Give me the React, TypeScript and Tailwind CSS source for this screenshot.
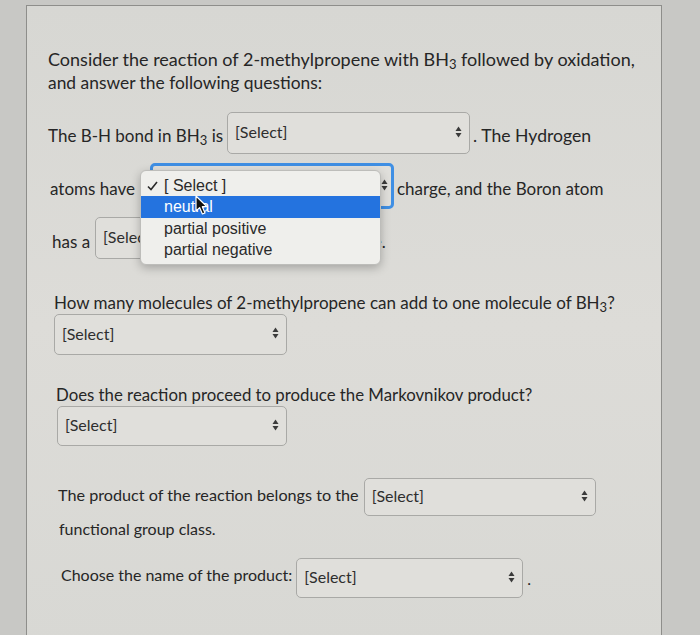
import React from 'react'

const Arrows = () => (
  <svg width="7" height="12" viewBox="0 0 7 12" className="shrink-0">
    <path d="M0.5 5 L3.5 0.5 L6.5 5 Z" fill="#3a3a3a" />
    <path d="M0.5 7 L6.5 7 L3.5 11.5 Z" fill="#3a3a3a" />
  </svg>
)

interface SelectProps {
  size: string
  focused?: boolean
}

const Select = ({ size, focused }: SelectProps) => (
  <div
    className={`${size} shrink-0 flex items-center justify-between pl-[7px] pb-[3px] rounded-[5px] bg-[#e0dfdb] ${
      focused ? 'pr-[3px] border-[3px] border-[#3f8fe4]' : 'pr-[7px] border border-[#a9a9a6]'
    }`}
  >
    <span className="text-[16px] text-[#2e2e2e]">[Select]</span>
    <Arrows />
  </div>
)

const Sub = () => <sub className="text-[13px]">3</sub>

export default function App() {
  return (
    <div className="relative w-[700px] h-[635px] overflow-hidden bg-[#c8c8c5] font-[Lato,sans-serif] leading-[23px] text-[#262626]">
      <div className="ml-[26px] mt-[5px] w-[636px] h-[640px] border-l border-t border-r border-[#8e8e8b] bg-gradient-to-b from-[#d7d7d3] via-[#dddcd8] to-[#d8d8d4] pt-[42px]">
        {/* intro */}
        <p className="ml-[21px]">
          <span className="text-[18px]">
            Consider the reaction of 2-methylpropene with BH<Sub /> followed by oxidation,
          </span>
          <br />
          <span className="text-[17.4px]">and answer the following questions:</span>
        </p>

        {/* inline selects */}
        <div className="ml-[21px] mt-[18px] flex items-center h-[42px] text-[17px]">
          <span className="pt-1">
            The B-H bond in BH<Sub /> is
          </span>
          <div className="ml-1">
            <Select size="w-[243px] h-[42px]" />
          </div>
          <span className="ml-[3px] pt-1 text-[17.6px]">. The Hydrogen</span>
        </div>

        <div className="ml-[23px] mt-[9px] flex items-center h-[46px] text-[17px]">
          <span className="pt-1">atoms have</span>
          <div className="ml-[15px]">
            <Select size="w-[244px] h-[46px]" focused />
          </div>
          <span className="ml-[3px] pt-1">charge, and the Boron atom</span>
        </div>

        <div className="ml-[25px] mt-[8px] flex items-center h-[42px] text-[17px]">
          <span className="pt-[7px]">has a</span>
          <div className="ml-[5px]">
            <Select size="w-[233px] h-[42px]" />
          </div>
          <span className="ml-[4px] pt-[7px]">charge.</span>
        </div>

        {/* question 2 */}
        <p className="ml-[27px] mt-[32px] text-[17px]">
          How many molecules of 2-methylpropene can add to one molecule of BH<Sub />?
        </p>
        <div className="ml-[27px]">
          <Select size="w-[233px] h-[41px]" />
        </div>

        {/* question 3 */}
        <p className="ml-[29px] mt-[28px] text-[16.8px]">
          Does the reaction proceed to produce the Markovnikov product?
        </p>
        <div className="ml-[30px]">
          <Select size="w-[230px] h-[40px]" />
        </div>

        {/* question 4 */}
        <div className="ml-[31px] mt-[32px] flex items-center h-[38px] text-[16.2px]">
          <span className="pb-[5px]">The product of the reaction belongs to the</span>
          <div className="ml-[5px]">
            <Select size="w-[232px] h-[38px]" />
          </div>
        </div>
        <p className="ml-[32px] mt-[1px] text-[16px]">functional group class.</p>

        {/* question 5 */}
        <div className="ml-[34px] mt-[18px] flex items-center h-[40px] text-[16px]">
          <span className="pb-[7px]">Choose the name of the product:</span>
          <div className="ml-[4px]">
            <Select size="w-[227px] h-[40px]" />
          </div>
          <span className="ml-[4px]">.</span>
        </div>
      </div>

      {/* open native dropdown */}
      <div className="absolute left-[140px] top-[170px] w-[241px] py-[4px] rounded-[6px] bg-[#efefec] border border-[#bdbdba] shadow-[0_3px_10px_rgba(0,0,0,0.25)] font-['Liberation_Sans',Arial,sans-serif] text-[16px] leading-[21px] text-[#2a2a2a]">
        <div className="relative pl-[23px] h-[21px]">
          <svg width="11" height="10" viewBox="0 0 11 10" className="absolute left-[6px] top-[6px]">
            <path d="M1 5.5 L4 8.5 L10 1" fill="none" stroke="#2a2a2a" strokeWidth="1.6" />
          </svg>
          [ Select ]
        </div>
        <div className="pl-[23px] h-[22px] bg-[#2473df] text-white">neutral</div>
        <div className="pl-[23px] h-[21px]">partial positive</div>
        <div className="pl-[23px] h-[21px]">partial negative</div>
      </div>

      {/* mouse pointer */}
      <svg width="14" height="21" viewBox="0 0 14 21" className="absolute left-[195px] top-[195px]">
        <path
          d="M1 1 L1 16 L4.6 12.6 L7.4 19 L10 17.9 L7.3 11.7 L12 11.7 Z"
          fill="#111"
          stroke="#fff"
          strokeWidth="1.2"
          strokeLinejoin="round"
        />
      </svg>
    </div>
  )
}
